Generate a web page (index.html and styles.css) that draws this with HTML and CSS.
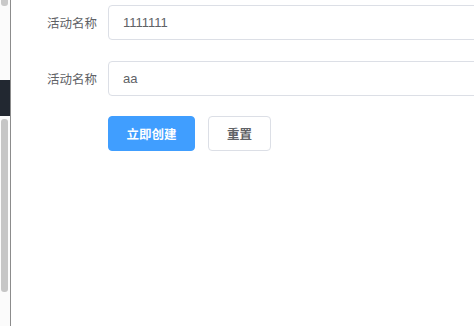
FILE: index.html
```html
<!DOCTYPE html>
<html lang="zh">
<head>
<meta charset="utf-8">
<link rel="stylesheet" href="styles.css">
</head>
<body>
<div class="page">
  <aside class="side">
    <div class="thumb-top"></div>
    <div class="dark-band"></div>
    <div class="thumb"></div>
  </aside>
  <main class="main">
    <form class="form">
      <div class="form-item">
        <label class="label">活动名称</label>
        <div class="input"><span class="value">1111111</span></div>
      </div>
      <div class="form-item">
        <label class="label">活动名称</label>
        <div class="input"><span class="value">aa</span></div>
      </div>
      <div class="form-item actions">
        <span class="label"></span>
        <button type="button" class="btn btn-primary">立即创建</button>
        <button type="button" class="btn btn-default">重置</button>
      </div>
    </form>
  </main>
</div>
</body>
</html>
```

FILE: styles.css
```css
html, body {
  margin: 0;
  padding: 0;
  background: #ffffff;
  overflow: hidden;
}
body {
  width: 474px;
  height: 326px;
  font-family: "Noto Sans CJK SC", "Liberation Sans", sans-serif;
}
.page {
  display: flex;
  height: 326px;
}
.side {
  width: 10px;
  flex: none;
  background: #fbfbfb;
  border-right: 1px solid #8c8c8c;
  display: flex;
  flex-direction: column;
}
.thumb-top {
  width: 7px;
  height: 6px;
  margin-left: 1px;
  background: #c9c9c9;
  border-radius: 0 0 3px 3px;
}
.dark-band {
  margin-top: 74px;
  height: 36px;
  background: #222831;
}
.thumb {
  margin-top: 3px;
  margin-left: 1px;
  width: 7px;
  height: 173px;
  background: #c6c6c6;
  border-radius: 3px;
}
.main {
  flex: 1;
  min-width: 0;
  overflow: hidden;
}
.form {
  padding-top: 5px;
}
.form-item {
  display: flex;
  align-items: center;
  margin-bottom: 21px;
}
.form-item.actions {
  margin-top: -1px;
}
.label {
  width: 97px;
  flex: none;
  box-sizing: border-box;
  padding-right: 11px;
  text-align: right;
  font-size: 12.5px;
  color: #606266;
}
.input {
  width: 420px;
  flex: none;
  height: 35px;
  box-sizing: border-box;
  border: 1px solid #dcdfe6;
  border-radius: 4px;
  padding-left: 14px;
  display: flex;
  align-items: center;
}
.value {
  font-family: "Liberation Sans", "Noto Sans CJK SC", sans-serif;
  font-size: 13px;
  color: #606266;
}
.btn {
  height: 35px;
  box-sizing: border-box;
  border-radius: 4px;
  font-family: "Noto Sans CJK SC", sans-serif;
  font-size: 12.5px;
  font-weight: 700;
  padding: 0;
  cursor: pointer;
}
.btn-primary {
  width: 87px;
  background: #409eff;
  border: 1px solid #409eff;
  color: #ffffff;
}
.btn-default {
  width: 63px;
  margin-left: 13px;
  background: #ffffff;
  border: 1px solid #dcdfe6;
  color: #606266;
}
```
